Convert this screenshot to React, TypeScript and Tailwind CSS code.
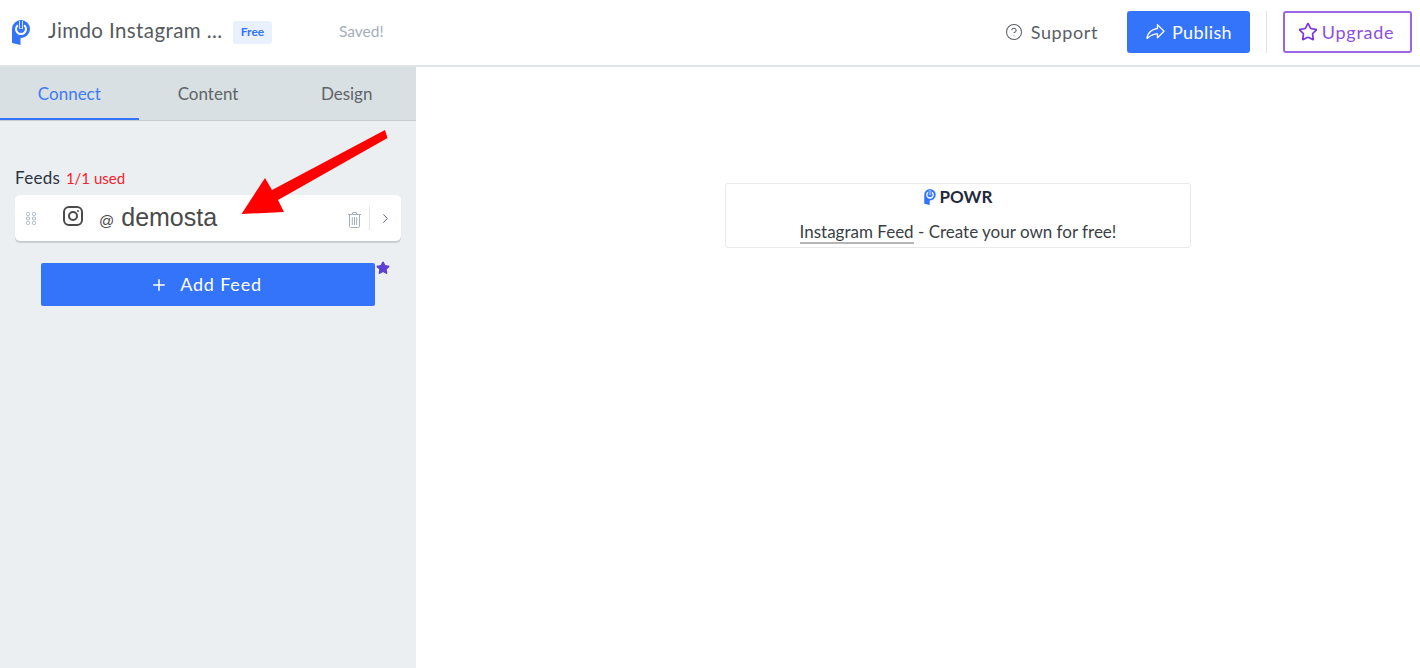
import React from 'react';
import { ChevronRight, CircleHelp, Plus, Star } from 'lucide-react';
import { PiShareFat } from 'react-icons/pi';

const PowrLogo: React.FC<{ className: string }> = ({ className }) => (
  <svg className={className} viewBox="0 0 18 25" fill="none">
    <path d="M9 0a9 9 0 0 1 0 18v-0.5L8.5 19v6L0 23V9a9 9 0 0 1 9-9z" fill="#3374fa" />
    <path d="M5.8 5.2a5 5 0 1 0 6.4 0" stroke="#fff" strokeWidth="2" />
    <path d="M9 1v8" stroke="#fff" strokeWidth="3.6" />
    <path d="M9 0v8.5" stroke="#3374fa" strokeWidth="2" />
  </svg>
);

const InstagramIcon = () => (
  <svg className="h-[20px] w-[20px]" viewBox="0 0 20 20" fill="none" stroke="#4a4a4a" strokeWidth="2">
    <rect x="1" y="1" width="18" height="18" rx="5" />
    <circle cx="10" cy="10" r="4" />
    <circle cx="15" cy="5" r="0.6" fill="#4a4a4a" strokeWidth="1" />
  </svg>
);

const DragIcon = () => (
  <svg className="h-[13px] w-[10px]" viewBox="0 0 10 13" fill="none" stroke="#a9b4c6" strokeWidth="1">
    <rect x="0.5" y="0.5" width="3" height="3" rx="1" />
    <rect x="6.5" y="0.5" width="3" height="3" rx="1" />
    <rect x="0.5" y="5" width="3" height="3" rx="1" />
    <rect x="6.5" y="5" width="3" height="3" rx="1" />
    <rect x="0.5" y="9.5" width="3" height="3" rx="1" />
    <rect x="6.5" y="9.5" width="3" height="3" rx="1" />
  </svg>
);

const TrashIcon = () => (
  <svg className="h-[16px] w-[13px]" viewBox="0 0 13 16" fill="none" stroke="#a3aebf" strokeWidth="1">
    <path d="M0 2.5h13M4.5 2.5V1a.5.5 0 0 1 .5-.5h3a.5.5 0 0 1 .5.5v1.5" />
    <path d="M1.5 2.5v12a1 1 0 0 0 1 1h8a1 1 0 0 0 1-1v-12" />
    <path d="M4.3 5v8M6.5 5v8M8.7 5v8" />
  </svg>
);

const RedArrow = () => (
  <svg className="pointer-events-none absolute left-0 top-0 h-[668px] w-[1420px]" viewBox="0 0 1420 668">
    <polygon points="385,130 387.5,138 278,200 284,212 241.5,214 265,178 272,190" fill="#fe0000" />
  </svg>
);

const tabs = ['Connect', 'Content', 'Design'];

const App: React.FC = () => {
  return (
    <div className="relative flex h-[668px] w-[1420px] flex-col overflow-hidden bg-white font-['Lato',sans-serif]">
      <header className="flex h-[67px] shrink-0 items-center border-b-2 border-[#dfe4e8] pb-[1px] pl-[12px] pr-[8px]">
        <PowrLogo className="h-[25px] w-[18px]" />
        <span className="mb-[3px] ml-[18px] w-[185px] text-[20.5px] tracking-[0.4px] text-[#555a60]">Jimdo Instagram ...</span>
        <span className="flex h-[23px] w-[39px] items-center justify-center rounded-[3px] bg-[#e9f1fe] text-[12px] font-bold text-[#3374fa]">Free</span>
        <span className="ml-[67px] text-[15.5px] text-[#a5adbd]">Saved!</span>
        <div className="ml-auto flex items-center">
          <CircleHelp className="h-[18px] w-[18px] text-[#5a6068]" strokeWidth={1.4} />
          <span className="ml-[8px] text-[18px] tracking-[0.6px] text-[#5a6068]">Support</span>
          <button className="ml-[29px] flex h-[42px] w-[123px] items-center justify-center gap-[6px] rounded-[3px] bg-[#3374fa] text-[18px] tracking-[0.4px] text-white">
            <PiShareFat className="h-[21px] w-[21px]" />
            Publish
          </button>
          <div className="mx-[16px] h-[42px] w-[1px] bg-[#dfe4e8]" />
          <button className="flex h-[42px] w-[129px] items-center justify-center gap-[4px] rounded-[3px] border-2 border-[#9a66e6] pr-[3px] text-[18px] tracking-[0.7px] text-[#8c4fe0]">
            <Star className="h-[20px] w-[20px] text-[#7a35dc]" strokeWidth={2} />
            Upgrade
          </button>
        </div>
      </header>
      <div className="flex min-h-0 flex-1">
        <aside className="flex w-[416px] shrink-0 flex-col bg-[#ebeff2]">
          <nav className="flex h-[54px] border-b border-[#c6ced2] bg-[#d9e0e3]">
            {tabs.map((tab, i) => (
              <div
                key={tab}
                className={
                  i === 0
                    ? 'flex w-[139px] items-center justify-center border-b-2 border-[#3374fa] pt-[2px] text-[17px] text-[#3f7bf6]'
                    : 'flex w-[139px] items-center justify-center border-b-2 border-transparent pt-[2px] text-[17px] text-[#5f6469]'
                }
              >
                {tab}
              </div>
            ))}
          </nav>
          <div className="px-[15px] pt-[47px]">
            <p className="text-[17px] leading-[20px] tracking-[0.3px] text-[#2b3340]">
              Feeds <span className="ml-[1px] text-[15px] tracking-normal text-[#f5222d]">1/1 used</span>
            </p>
            <div className="mt-[7px] flex h-[46px] items-center rounded-[5px] bg-white pl-[11px] pr-[8px] shadow-[0_2px_0_#c9ced3]">
              <DragIcon />
              <div className="ml-[27px] -mt-[5px]">
                <InstagramIcon />
              </div>
              <span className="ml-[16px] mt-[6px] font-['Liberation_Sans',sans-serif] text-[15px] text-[#4a4a4a]">@</span>
              <span className="ml-[7px] font-['Liberation_Sans',sans-serif] text-[25px] text-[#4a4a4a]">demosta</span>
              <div className="ml-auto flex items-center">
                <div className="mt-[4px]">
                  <TrashIcon />
                </div>
                <div className="mx-[8px] h-[24px] w-[1px] bg-[#e3e7ea]" />
                <ChevronRight className="h-[15px] w-[15px] text-[#56606e]" strokeWidth={1.6} />
              </div>
            </div>
            <div className="relative ml-[26px] mt-[22px] w-[334px]">
              <button className="flex h-[43px] w-full items-center justify-center gap-[12px] rounded-[2px] bg-[#3374fa] pr-[4px] text-[18px] tracking-[0.8px] text-white">
                <Plus className="h-[18px] w-[18px]" strokeWidth={2} />
                Add Feed
              </button>
              <Star className="absolute -right-[15px] -top-[2px] h-[14px] w-[14px] fill-[#5d3fd3] text-[#5d3fd3]" />
            </div>
          </div>
        </aside>
        <main className="flex flex-1 pl-[309px] pt-[116px]">
          <div className="flex h-[65px] w-[466px] flex-col items-center rounded-[3px] border border-[#e8eaec] pt-[3px]">
            <div className="flex items-center gap-[4px]">
              <PowrLogo className="h-[16px] w-[12px]" />
              <span className="text-[17px] font-bold leading-[20px] text-[#1f2a3c]">POWR</span>
            </div>
            <p className="mt-[15px] text-[17px] leading-[20px] text-[#3a3f45]">
              <span className="border-b-2 border-[#b5b5b5]">Instagram Feed</span> - Create your own for free!
            </p>
          </div>
        </main>
      </div>
      <RedArrow />
    </div>
  );
};

export default App;
